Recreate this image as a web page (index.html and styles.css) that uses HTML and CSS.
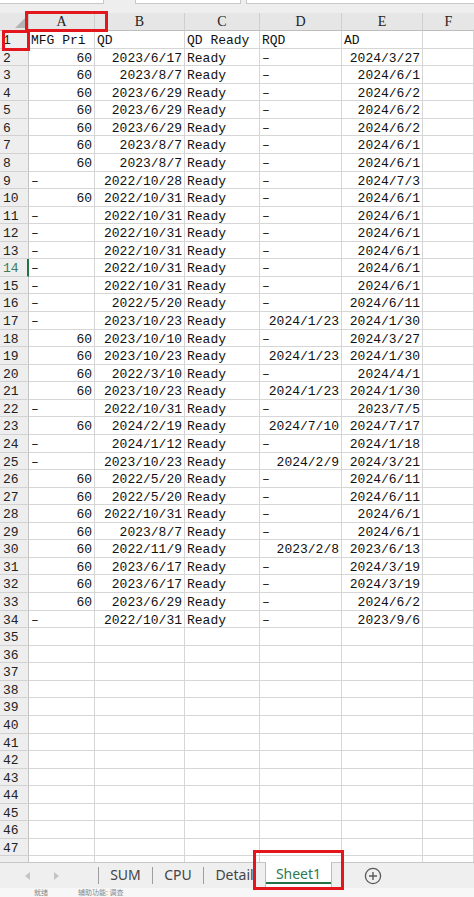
FILE: index.html
```html
<!DOCTYPE html>
<html lang="en">
<head>
<meta charset="utf-8">
<title>Sheet1</title>
<link rel="stylesheet" href="styles.css">
</head>
<body>
<div class="app">
  <div class="formula">
    <div class="fbox namebox"></div>
    <div class="fgap"></div>
    <div class="fbox fx"></div>
    <div class="fgap small"></div>
    <div class="fbox input"></div>
  </div>

  <div class="viewport">
    <div class="sheet">
      <div class="corner"><svg width="29" height="18" viewBox="0 0 29 18"><polygon points="25,5 25,15 15,15" fill="#b4b4b4"/></svg></div>
      <div class="ch">A</div><div class="ch">B</div><div class="ch">C</div><div class="ch">D</div><div class="ch">E</div><div class="ch last">F</div>

      <div class="rh">1</div><div class="c">MFG Pri</div><div class="c">QD</div><div class="c">QD Ready</div><div class="c">RQD</div><div class="c">AD</div><div class="c"></div>
      <div class="rh">2</div><div class="c n">60</div><div class="c n">2023/6/17</div><div class="c">Ready</div><div class="c">–</div><div class="c n">2024/3/27</div><div class="c"></div>
      <div class="rh">3</div><div class="c n">60</div><div class="c n">2023/8/7</div><div class="c">Ready</div><div class="c">–</div><div class="c n">2024/6/1</div><div class="c"></div>
      <div class="rh">4</div><div class="c n">60</div><div class="c n">2023/6/29</div><div class="c">Ready</div><div class="c">–</div><div class="c n">2024/6/2</div><div class="c"></div>
      <div class="rh">5</div><div class="c n">60</div><div class="c n">2023/6/29</div><div class="c">Ready</div><div class="c">–</div><div class="c n">2024/6/2</div><div class="c"></div>
      <div class="rh">6</div><div class="c n">60</div><div class="c n">2023/6/29</div><div class="c">Ready</div><div class="c">–</div><div class="c n">2024/6/2</div><div class="c"></div>
      <div class="rh">7</div><div class="c n">60</div><div class="c n">2023/8/7</div><div class="c">Ready</div><div class="c">–</div><div class="c n">2024/6/1</div><div class="c"></div>
      <div class="rh">8</div><div class="c n">60</div><div class="c n">2023/8/7</div><div class="c">Ready</div><div class="c">–</div><div class="c n">2024/6/1</div><div class="c"></div>
      <div class="rh">9</div><div class="c">–</div><div class="c n">2022/10/28</div><div class="c">Ready</div><div class="c">–</div><div class="c n">2024/7/3</div><div class="c"></div>
      <div class="rh">10</div><div class="c n">60</div><div class="c n">2022/10/31</div><div class="c">Ready</div><div class="c">–</div><div class="c n">2024/6/1</div><div class="c"></div>
      <div class="rh">11</div><div class="c">–</div><div class="c n">2022/10/31</div><div class="c">Ready</div><div class="c">–</div><div class="c n">2024/6/1</div><div class="c"></div>
      <div class="rh">12</div><div class="c">–</div><div class="c n">2022/10/31</div><div class="c">Ready</div><div class="c">–</div><div class="c n">2024/6/1</div><div class="c"></div>
      <div class="rh">13</div><div class="c">–</div><div class="c n">2022/10/31</div><div class="c">Ready</div><div class="c">–</div><div class="c n">2024/6/1</div><div class="c"></div>
      <div class="rh active">14</div><div class="c">–</div><div class="c n">2022/10/31</div><div class="c">Ready</div><div class="c">–</div><div class="c n">2024/6/1</div><div class="c"></div>
      <div class="rh">15</div><div class="c">–</div><div class="c n">2022/10/31</div><div class="c">Ready</div><div class="c">–</div><div class="c n">2024/6/1</div><div class="c"></div>
      <div class="rh">16</div><div class="c">–</div><div class="c n">2022/5/20</div><div class="c">Ready</div><div class="c">–</div><div class="c n">2024/6/11</div><div class="c"></div>
      <div class="rh">17</div><div class="c">–</div><div class="c n">2023/10/23</div><div class="c">Ready</div><div class="c n">2024/1/23</div><div class="c n">2024/1/30</div><div class="c"></div>
      <div class="rh">18</div><div class="c n">60</div><div class="c n">2023/10/10</div><div class="c">Ready</div><div class="c">–</div><div class="c n">2024/3/27</div><div class="c"></div>
      <div class="rh">19</div><div class="c n">60</div><div class="c n">2023/10/23</div><div class="c">Ready</div><div class="c n">2024/1/23</div><div class="c n">2024/1/30</div><div class="c"></div>
      <div class="rh">20</div><div class="c n">60</div><div class="c n">2022/3/10</div><div class="c">Ready</div><div class="c">–</div><div class="c n">2024/4/1</div><div class="c"></div>
      <div class="rh">21</div><div class="c n">60</div><div class="c n">2023/10/23</div><div class="c">Ready</div><div class="c n">2024/1/23</div><div class="c n">2024/1/30</div><div class="c"></div>
      <div class="rh">22</div><div class="c">–</div><div class="c n">2022/10/31</div><div class="c">Ready</div><div class="c">–</div><div class="c n">2023/7/5</div><div class="c"></div>
      <div class="rh">23</div><div class="c n">60</div><div class="c n">2024/2/19</div><div class="c">Ready</div><div class="c n">2024/7/10</div><div class="c n">2024/7/17</div><div class="c"></div>
      <div class="rh">24</div><div class="c">–</div><div class="c n">2024/1/12</div><div class="c">Ready</div><div class="c">–</div><div class="c n">2024/1/18</div><div class="c"></div>
      <div class="rh">25</div><div class="c">–</div><div class="c n">2023/10/23</div><div class="c">Ready</div><div class="c n">2024/2/9</div><div class="c n">2024/3/21</div><div class="c"></div>
      <div class="rh">26</div><div class="c n">60</div><div class="c n">2022/5/20</div><div class="c">Ready</div><div class="c">–</div><div class="c n">2024/6/11</div><div class="c"></div>
      <div class="rh">27</div><div class="c n">60</div><div class="c n">2022/5/20</div><div class="c">Ready</div><div class="c">–</div><div class="c n">2024/6/11</div><div class="c"></div>
      <div class="rh">28</div><div class="c n">60</div><div class="c n">2022/10/31</div><div class="c">Ready</div><div class="c">–</div><div class="c n">2024/6/1</div><div class="c"></div>
      <div class="rh">29</div><div class="c n">60</div><div class="c n">2023/8/7</div><div class="c">Ready</div><div class="c">–</div><div class="c n">2024/6/1</div><div class="c"></div>
      <div class="rh">30</div><div class="c n">60</div><div class="c n">2022/11/9</div><div class="c">Ready</div><div class="c n">2023/2/8</div><div class="c n">2023/6/13</div><div class="c"></div>
      <div class="rh">31</div><div class="c n">60</div><div class="c n">2023/6/17</div><div class="c">Ready</div><div class="c">–</div><div class="c n">2024/3/19</div><div class="c"></div>
      <div class="rh">32</div><div class="c n">60</div><div class="c n">2023/6/17</div><div class="c">Ready</div><div class="c">–</div><div class="c n">2024/3/19</div><div class="c"></div>
      <div class="rh">33</div><div class="c n">60</div><div class="c n">2023/6/29</div><div class="c">Ready</div><div class="c">–</div><div class="c n">2024/6/2</div><div class="c"></div>
      <div class="rh">34</div><div class="c">–</div><div class="c n">2022/10/31</div><div class="c">Ready</div><div class="c">–</div><div class="c n">2023/9/6</div><div class="c"></div>
      <div class="rh">35</div><div class="c"></div><div class="c"></div><div class="c"></div><div class="c"></div><div class="c"></div><div class="c"></div>
      <div class="rh">36</div><div class="c"></div><div class="c"></div><div class="c"></div><div class="c"></div><div class="c"></div><div class="c"></div>
      <div class="rh">37</div><div class="c"></div><div class="c"></div><div class="c"></div><div class="c"></div><div class="c"></div><div class="c"></div>
      <div class="rh">38</div><div class="c"></div><div class="c"></div><div class="c"></div><div class="c"></div><div class="c"></div><div class="c"></div>
      <div class="rh">39</div><div class="c"></div><div class="c"></div><div class="c"></div><div class="c"></div><div class="c"></div><div class="c"></div>
      <div class="rh">40</div><div class="c"></div><div class="c"></div><div class="c"></div><div class="c"></div><div class="c"></div><div class="c"></div>
      <div class="rh">41</div><div class="c"></div><div class="c"></div><div class="c"></div><div class="c"></div><div class="c"></div><div class="c"></div>
      <div class="rh">42</div><div class="c"></div><div class="c"></div><div class="c"></div><div class="c"></div><div class="c"></div><div class="c"></div>
      <div class="rh">43</div><div class="c"></div><div class="c"></div><div class="c"></div><div class="c"></div><div class="c"></div><div class="c"></div>
      <div class="rh">44</div><div class="c"></div><div class="c"></div><div class="c"></div><div class="c"></div><div class="c"></div><div class="c"></div>
      <div class="rh">45</div><div class="c"></div><div class="c"></div><div class="c"></div><div class="c"></div><div class="c"></div><div class="c"></div>
      <div class="rh">46</div><div class="c"></div><div class="c"></div><div class="c"></div><div class="c"></div><div class="c"></div><div class="c"></div>
      <div class="rh">47</div><div class="c"></div><div class="c"></div><div class="c"></div><div class="c"></div><div class="c"></div><div class="c"></div>
      <div class="rh"></div><div class="c"></div><div class="c"></div><div class="c"></div><div class="c"></div><div class="c"></div><div class="c"></div>
    </div>
  </div>

  <div class="tabbar">
    <div class="navs">
      <svg class="nav" width="6" height="8" viewBox="0 0 6 8"><polygon points="5,0 5,8 0,4" fill="#c4c4c4"/></svg>
      <svg class="nav" width="6" height="8" viewBox="0 0 6 8"><polygon points="1,0 1,8 6,4" fill="#c4c4c4"/></svg>
    </div>
    <div class="sep"></div>
    <div class="tab t-sum">SUM</div>
    <div class="sep"></div>
    <div class="tab t-cpu">CPU</div>
    <div class="sep"></div>
    <div class="tab t-detail">Detail</div>
    <div class="tab active">Sheet1</div>
    <div class="add">
      <svg width="18" height="18" viewBox="0 0 18 18"><circle cx="9" cy="9" r="7.6" fill="none" stroke="#5a5a5a" stroke-width="1.3"/><path d="M9 5v8M5 9h8" stroke="#5a5a5a" stroke-width="1.4"/></svg>
    </div>
  </div>

  <div class="status"><span>就绪</span><span class="st2">辅助功能: 调查</span></div>

  <div class="mark mark-col"></div>
  <div class="mark mark-row"></div>
  <div class="mark mark-tab"></div>
</div>
</body>
</html>
```

FILE: styles.css
```css
* { box-sizing: border-box; }
html, body { margin: 0; padding: 0; }
body {
  background: #ffffff;
  font-family: "Liberation Mono", "DejaVu Sans Mono", monospace;
}
.app {
  position: relative;
  width: 474px;
  height: 897px;
  overflow: hidden;
  display: flex;
  flex-direction: column;
}

/* formula bar remnant */
.formula {
  height: 13px;
  flex: 0 0 13px;
  background: #eeeeee;
  display: flex;
  align-items: flex-start;
}
.fbox {
  height: 4px;
  background: #ffffff;
  border: 1px solid #c8c8c8;
  border-top: none;
}
.namebox { width: 104px; border-left: none; }
.fgap { width: 31px; }
.fgap.small { width: 5px; }
.fx { width: 106px; }
.input { flex: 1; border-right: none; }

/* sheet grid */
.viewport {
  height: 849px;
  flex: 0 0 849px;
  overflow: hidden;
}
.sheet {
  display: grid;
  grid-template-columns: 29px 66px 90px 75px 82px 81px 51px;
  grid-template-rows: 18px;
  grid-auto-rows: 17.57px;
  font-size: 13px;
  color: #111111;
}
.corner {
  background: #e6e6e6;
  border-right: 1px solid #c4c4c4;
  border-bottom: 1px solid #bdbdbd;
}
.corner svg { display: block; }
.ch {
  background: #e6e6e6;
  border-right: 1px solid #cfcfcf;
  border-bottom: 1px solid #bdbdbd;
  font-family: "Liberation Serif", "DejaVu Serif", serif;
  font-size: 14px;
  color: #222222;
  display: flex;
  align-items: center;
  justify-content: center;
  padding-top: 1px;
}
.ch.last { border-right: none; }
.rh {
  background: #eeeeee;
  border-right: 1px solid #c4c4c4;
  border-bottom: 1px solid #d2d2d2;
  font-size: 13px;
  color: #222222;
  padding-left: 3px;
  line-height: 17px;
  padding-top: 1px;
  white-space: nowrap;
}
.rh.active {
  color: #3f7b57;
  border-right: 2px solid #217346;
}
.c {
  border-right: 1px solid #d6d6d6;
  border-bottom: 1px solid #d6d6d6;
  padding: 1px 2px 0 2px;
  line-height: 17px;
  white-space: nowrap;
  overflow: hidden;
}
.c.n { text-align: right; }

/* sheet tabs */
.tabbar {
  height: 26px;
  flex: 0 0 26px;
  background: #efefef;
  border-top: 1px solid #c6c6c6;
  display: flex;
  align-items: stretch;
  font-family: "Noto Sans", "Open Sans", sans-serif;
  font-size: 14px;
  color: #444444;
}
.navs {
  width: 98px;
  display: flex;
  align-items: center;
  gap: 22px;
  padding-left: 25px;
}
.nav { display: block; }
.sep {
  width: 1px;
  background: #9e9e9e;
  margin: 4px 0 4px 0;
}
.tab {
  display: flex;
  align-items: center;
  justify-content: center;
  padding-bottom: 2px;
}
.t-sum { width: 53px; }
.t-cpu { width: 50px; }
.t-detail { width: 61px; }
.tab.active {
  width: 67px;
  margin-top: -1px;
  background: #ffffff;
  border-left: 1px solid #bdbdbd;
  border-right: 1px solid #bdbdbd;
  color: #2f7a4f;
  box-shadow: inset 0 -3px 0 #ffffff, inset 0 -5px 0 #217346;
  margin-bottom: 1px;
}
.add {
  width: 81px;
  display: flex;
  align-items: center;
  justify-content: center;
}
.add svg { display: block; }

.status {
  flex: 1;
  background: #f7f7f7;
  overflow: hidden;
  font-family: "Noto Sans CJK SC", "Noto Sans", sans-serif;
  font-size: 7px;
  color: #888888;
  padding: 0 0 0 34px;
  line-height: 9px;
  white-space: nowrap;
}
.st2 { margin-left: 30px; }

/* red annotation boxes */
.mark {
  position: absolute;
  border: 3px solid #e3161d;
}
.mark-col { left: 25px; top: 11px; width: 83px; height: 21px; }
.mark-row { left: 2px; top: 30px; width: 28px; height: 21px; }
.mark-tab { left: 253px; top: 850px; width: 91px; height: 40px; }
```
